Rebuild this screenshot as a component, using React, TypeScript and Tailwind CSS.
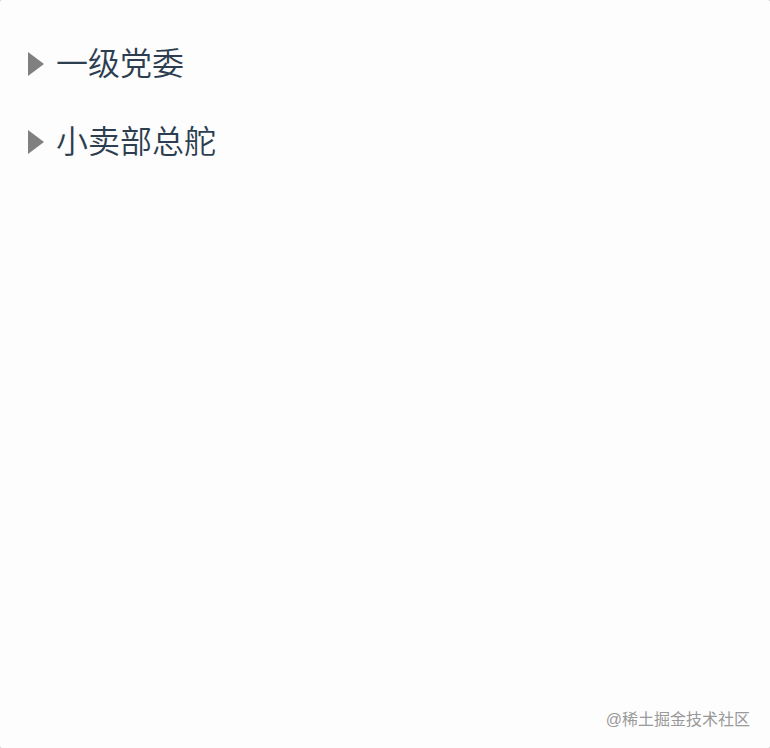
import { useState } from "react";

interface TreeNode {
  id: number;
  label: string;
}

const nodes: TreeNode[] = [
  { id: 1, label: "一级党委" },
  { id: 2, label: "小卖部总舵" },
];

function TreeItem({ node }: { node: TreeNode }) {
  const [expanded, setExpanded] = useState(false);

  return (
    <li>
      <button
        type="button"
        aria-expanded={expanded}
        onClick={() => setExpanded(!expanded)}
        className="flex items-center gap-3 text-[32px] leading-[46px] font-[350] text-[#2c3e50]"
      >
        <svg
          aria-hidden="true"
          viewBox="0 0 16 24"
          className={`h-6 w-4 shrink-0 fill-[#808080] ${expanded ? "rotate-90" : ""}`}
        >
          <path d="M0 0 L16 12 L0 24 Z" />
        </svg>
        <span>{node.label}</span>
      </button>
    </li>
  );
}

export default function App() {
  return (
    <div className="bg-[#c8c8c8]">
      <div className="flex min-h-screen flex-col justify-between rounded-xs bg-[#fdfdfd] font-['Liberation_Sans','Noto_Sans_CJK_SC',sans-serif]">
        <ul className="flex flex-col gap-8 px-7 pt-[41px]">
          {nodes.map((node) => (
            <TreeItem key={node.id} node={node} />
          ))}
        </ul>
        <footer className="px-5 pb-4 text-right text-base leading-6 text-[#999999]">
          @稀土掘金技术社区
        </footer>
      </div>
    </div>
  );
}
